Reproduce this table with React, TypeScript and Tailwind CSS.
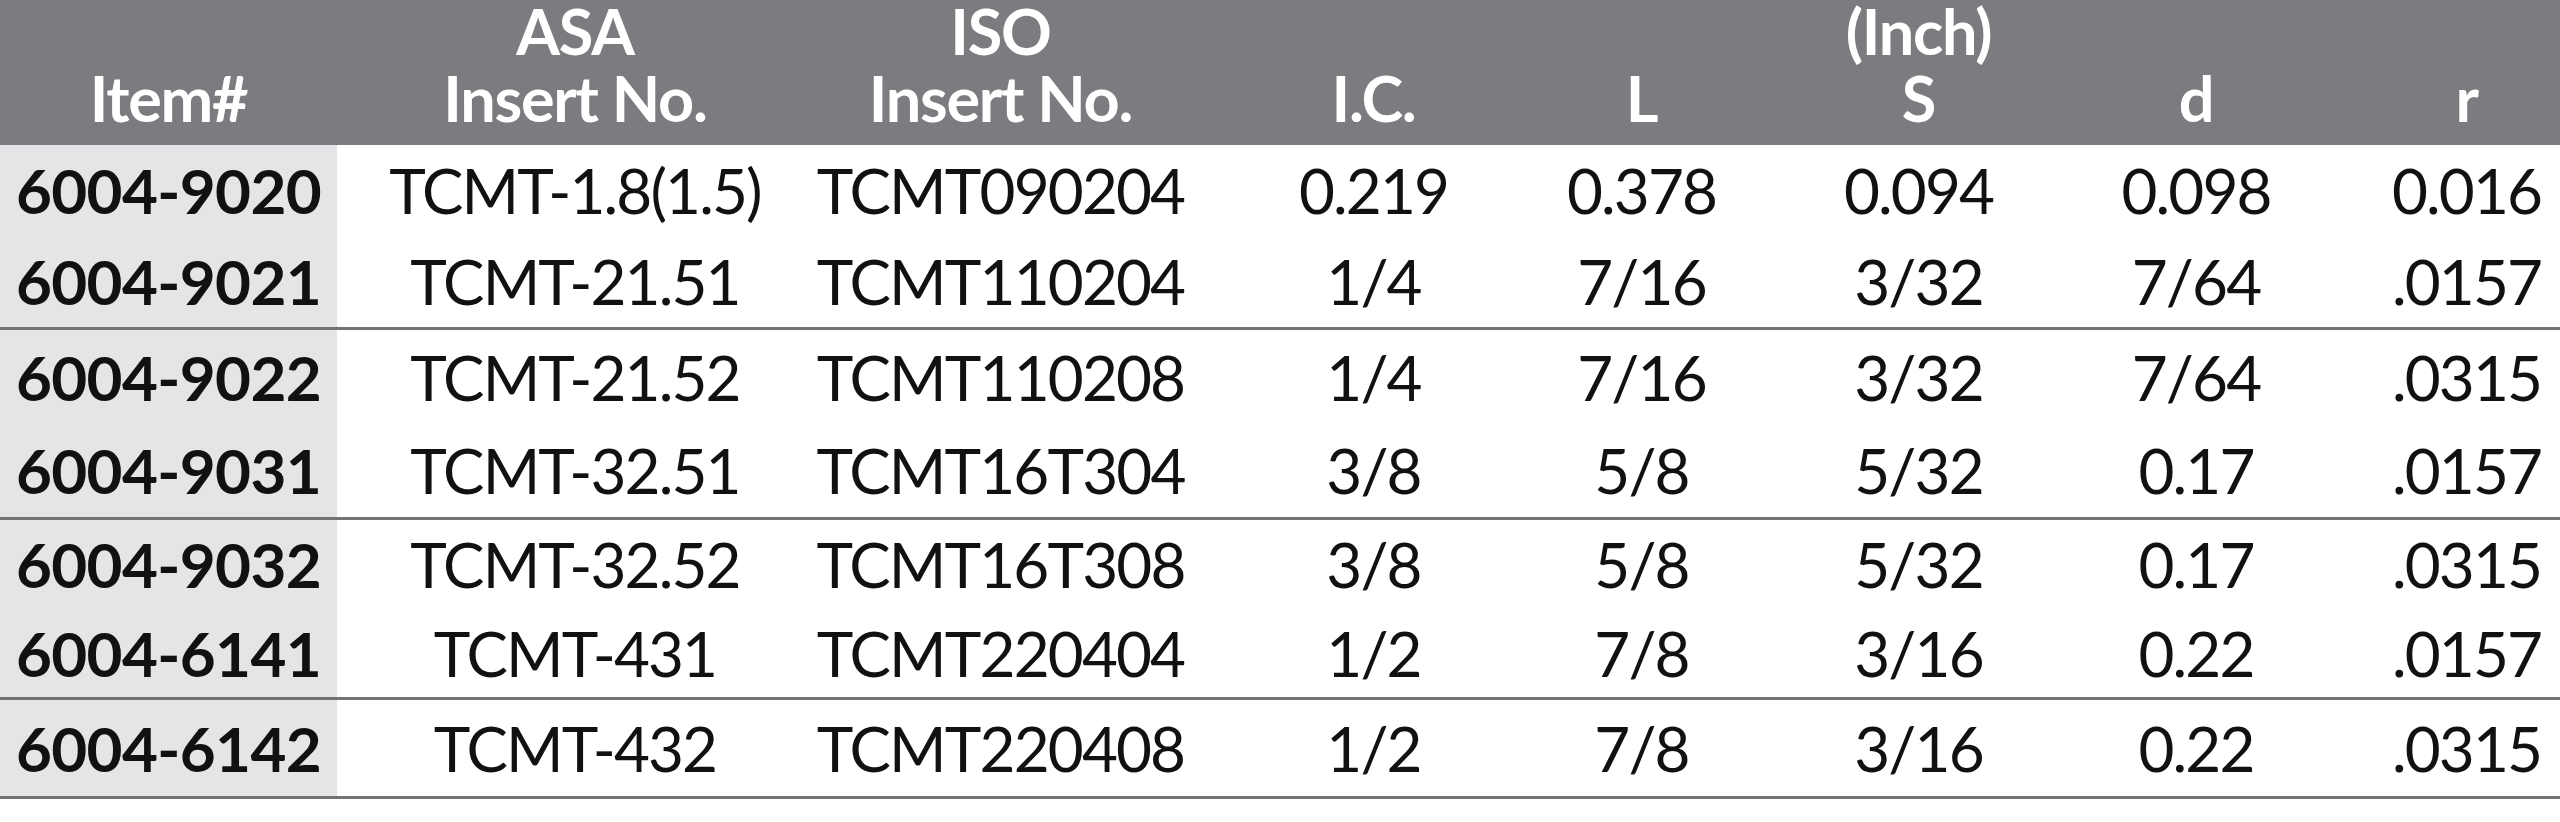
const columns = [
  { w: "w-[337px]", pad: "" },
  { w: "w-[450px]", pad: "pl-[26px]" },
  { w: "w-[399px]", pad: "pl-[28px]" },
  { w: "w-[321px]", pad: "pl-[54px]" },
  { w: "w-[273px]", pad: "pr-[4px]" },
  { w: "w-[277px]", pad: "" },
  { w: "w-[274px]", pad: "pl-[4px]" },
  { w: "w-[229px]", pad: "pl-[42px]" },
];

const headers: [string, string][] = [
  ["", "Item#"],
  ["ASA", "Insert No."],
  ["ISO", "Insert No."],
  ["", "I.C."],
  ["", "L"],
  ["(Inch)", "S"],
  ["", "d"],
  ["", "r"],
];

const groups: { h: string; cells: string[] }[][] = [
  [
    { h: "h-[91px]", cells: ["6004-9020", "TCMT-1.8(1.5)", "TCMT090204", "0.219", "0.378", "0.094", "0.098", "0.016"] },
    { h: "h-[91px]", cells: ["6004-9021", "TCMT-21.51", "TCMT110204", "1/4", "7/16", "3/32", "7/64", ".0157"] },
  ],
  [
    { h: "h-[94px]", cells: ["6004-9022", "TCMT-21.52", "TCMT110208", "1/4", "7/16", "3/32", "7/64", ".0315"] },
    { h: "h-[93px]", cells: ["6004-9031", "TCMT-32.51", "TCMT16T304", "3/8", "5/8", "5/32", "0.17", ".0157"] },
  ],
  [
    { h: "h-[89px]", cells: ["6004-9032", "TCMT-32.52", "TCMT16T308", "3/8", "5/8", "5/32", "0.17", ".0315"] },
    { h: "h-[88px]", cells: ["6004-6141", "TCMT-431", "TCMT220404", "1/2", "7/8", "3/16", "0.22", ".0157"] },
  ],
  [
    { h: "h-[96px]", cells: ["6004-6142", "TCMT-432", "TCMT220408", "1/2", "7/8", "3/16", "0.22", ".0315"] },
  ],
];

export default function App() {
  return (
    <div className="w-[2560px] h-[822px] overflow-hidden bg-white font-['Lato',sans-serif]">
      <div className="flex h-[145px] bg-[#7b7c80] pb-[14px] text-white font-bold text-[63px] leading-[67px] tracking-[-0.02em]">
        {headers.map(([top, bottom], i) => (
          <div
            key={i}
            className={`${columns[i].w} ${columns[i].pad} flex flex-col justify-end items-center`}
          >
            {top && <span>{top}</span>}
            <span>{bottom}</span>
          </div>
        ))}
      </div>
      {groups.map((rows, g) => (
        <div key={g} className="border-b-[3px] border-[#737373]">
          {rows.map((row, r) => (
            <div key={r} className={`${row.h} flex text-[#111]`}>
              {row.cells.map((cell, i) => (
                <div
                  key={i}
                  className={`${columns[i].w} ${columns[i].pad} flex items-center justify-center ${
                    i === 0
                      ? "bg-[#e5e5e7] font-bold text-[62px] tracking-[-0.01em]"
                      : "text-[62px] tracking-[-0.03em]"
                  }`}
                >
                  {cell}
                </div>
              ))}
            </div>
          ))}
        </div>
      ))}
    </div>
  );
}
